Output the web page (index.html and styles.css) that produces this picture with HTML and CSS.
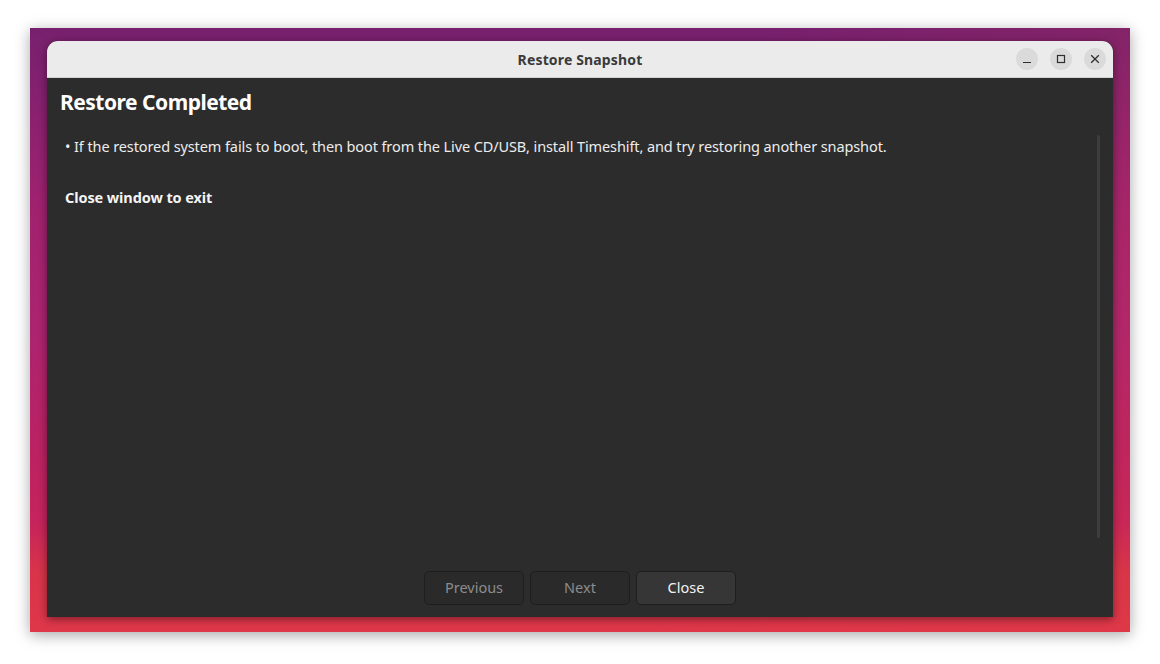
FILE: index.html
```html
<!DOCTYPE html>
<html>
<head>
<meta charset="utf-8">
<link rel="stylesheet" href="styles.css">
</head>
<body>
<div class="desktop">
  <div class="window">
    <div class="titlebar">
      <div class="title">Restore Snapshot</div>
      <div class="controls">
        <span class="ctl"><svg width="10" height="10" viewBox="0 0 10 10"><path d="M1 8.5H9" stroke="#2e2e2e" stroke-width="1.2"/></svg></span>
        <span class="ctl"><svg width="10" height="10" viewBox="0 0 10 10"><rect x="1.5" y="1.5" width="7" height="7" fill="none" stroke="#2e2e2e" stroke-width="1.2"/></svg></span>
        <span class="ctl"><svg width="10" height="10" viewBox="0 0 10 10"><path d="M1.2 1.2L8.8 8.8M8.8 1.2L1.2 8.8" stroke="#2e2e2e" stroke-width="1.3"/></svg></span>
      </div>
    </div>
    <div class="content">
      <h1 class="heading">Restore Completed</h1>
      <div class="scroll-area">
        <div class="scroll-text">
          <p class="msg">• If the restored system fails to boot, then boot from the Live CD/USB, install Timeshift, and try restoring another snapshot.</p>
          <p class="msg bold">Close window to exit</p>
        </div>
        <div class="scrollbar"></div>
      </div>
      <div class="actions">
        <button class="btn disabled">Previous</button>
        <button class="btn disabled">Next</button>
        <button class="btn">Close</button>
      </div>
    </div>
  </div>
</div>
</body>
</html>
```

FILE: styles.css
```css
html, body {
  margin: 0;
  padding: 0;
  background: #ffffff;
}
body {
  width: 1160px;
  height: 664px;
  overflow: hidden;
  padding: 28px 30px 0 30px;
  box-sizing: border-box;
  font-family: "Noto Sans", "Open Sans", sans-serif;
}
.desktop {
  width: 1100px;
  height: 604px;
  box-sizing: border-box;
  padding: 13px 17px 15px 17px;
  background:
    linear-gradient(100deg, rgba(0,0,0,0) 60%, rgba(220,60,60,0.15) 100%),
    linear-gradient(180deg, #77206e 0%, #87216f 12%, #a0226f 30%, #ac2470 50%, #bb2262 70%, #c6245c 82%, #d8344a 90%, #df374a 100%);
  box-shadow: 0 3px 14px rgba(0,0,0,0.35);
}
.window {
  width: 1066px;
  height: 576px;
  display: flex;
  flex-direction: column;
  border-radius: 11px 11px 0 0;
  overflow: hidden;
  box-shadow: 0 2px 8px rgba(0,0,0,0.45);
  background: #2c2c2c;
}
.titlebar {
  height: 36px;
  flex: 0 0 36px;
  background: #ebebeb;
  border-bottom: 1px solid #d2d2d2;
  display: flex;
  align-items: center;
  justify-content: center;
  position: relative;
}
.title {
  font-size: 14px;
  font-weight: 700;
  color: #3a3a3a;
  letter-spacing: 0.15px;
}
.controls {
  position: absolute;
  right: 7px;
  top: 7px;
  display: flex;
  gap: 12px;
}
.ctl {
  width: 22px;
  height: 22px;
  border-radius: 50%;
  background: #dadada;
  display: flex;
  align-items: center;
  justify-content: center;
}
.content {
  flex: 1;
  display: flex;
  flex-direction: column;
  color: #f0f0f0;
}
.heading {
  margin: 0;
  padding: 11px 0 0 13px;
  height: 36px;
  font-size: 21px;
  line-height: 26px;
  font-weight: 700;
  color: #ffffff;
  letter-spacing: -0.5px;
}
.scroll-area {
  flex: 1;
  display: flex;
}
.scroll-text {
  flex: 1;
  padding: 11px 0 0 18px;
}
.msg {
  margin: 0 0 31px 0;
  font-size: 14.5px;
  line-height: 20px;
  color: #ececec;
  letter-spacing: -0.1px;
}
.msg.bold {
  font-weight: 700;
  color: #f4f4f4;
  letter-spacing: -0.1px;
}
.scrollbar {
  width: 3px;
  margin: 10px 13px 17px 0;
  background: #3d3d3d;
  border-radius: 2px;
}
.actions {
  display: flex;
  justify-content: center;
  gap: 6px;
  padding: 16px 0 12px 0;
}
.btn {
  width: 100px;
  height: 34px;
  box-sizing: border-box;
  border: 1px solid #1e1e1e;
  border-radius: 5px;
  background: #2a2a2a;
  color: #8c8c8c;
  font-family: "Noto Sans", "Open Sans", sans-serif;
  font-size: 14.5px;
  line-height: 29px;
  padding: 0 0 2px 0;
}
.btn:not(.disabled) {
  background: #363636;
  color: #f2f2f2;
}
```
